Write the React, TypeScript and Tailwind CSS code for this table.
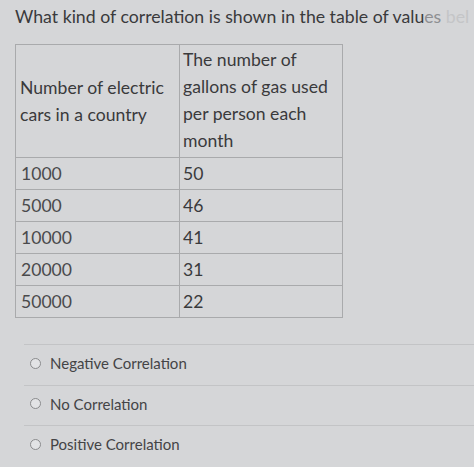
const rows = [
  ["1000", "50"],
  ["5000", "46"],
  ["10000", "41"],
  ["20000", "31"],
  ["50000", "22"],
];

const options = ["Negative Correlation", "No Correlation", "Positive Correlation"];

export default function App() {
  return (
    <div
      className="h-[467px] w-[474px] overflow-hidden bg-[#d5d6d8] text-[#3a3a3c]"
      style={{ fontFamily: "Lato, 'Open Sans', sans-serif" }}
    >
      <h1 className="whitespace-nowrap pl-[15px] pt-[5px] text-[17.7px] leading-[24px] font-normal">
        What kind of correlation is shown in the table of valu
        <span className="text-[#8e8f92]">es</span>
        <span className="text-[#c4c5c7]"> bel</span>
      </h1>

      <table className="ml-[15px] mt-[15px] w-[328px] border-collapse text-[17.6px] leading-[27px]">
        <tbody>
          <tr>
            <td className="w-[164px] border border-[#a9aaac] px-[4px] align-middle">
              Number of electric
              <br />
              cars in a country
            </td>
            <td className="border border-[#a9aaac] px-[3px] pt-[1px] pb-[3px]">
              The number of
              <br />
              gallons of gas used
              <br />
              per person each
              <br />
              month
            </td>
          </tr>
          {rows.map(([a, b]) => (
            <tr key={a} className="h-[32px]">
              <td className="border border-[#a9aaac] px-[5px] text-[#4a4a4c]">{a}</td>
              <td className="border border-[#a9aaac] px-[3px]">{b}</td>
            </tr>
          ))}
        </tbody>
      </table>

      <div className="ml-[24px] mt-[26px]">
        {options.map((o) => (
          <div
            key={o}
            className="flex h-[40.5px] items-center gap-[9px] border-t border-[#c3c4c6] pb-[3px] pl-[6px] text-[15px] text-[#444446]"
          >
            <span className="h-[11px] w-[11px] rounded-full border border-[#8a8b8d] bg-[#e2e3e5]" />
            <span>{o}</span>
          </div>
        ))}
      </div>
    </div>
  );
}
